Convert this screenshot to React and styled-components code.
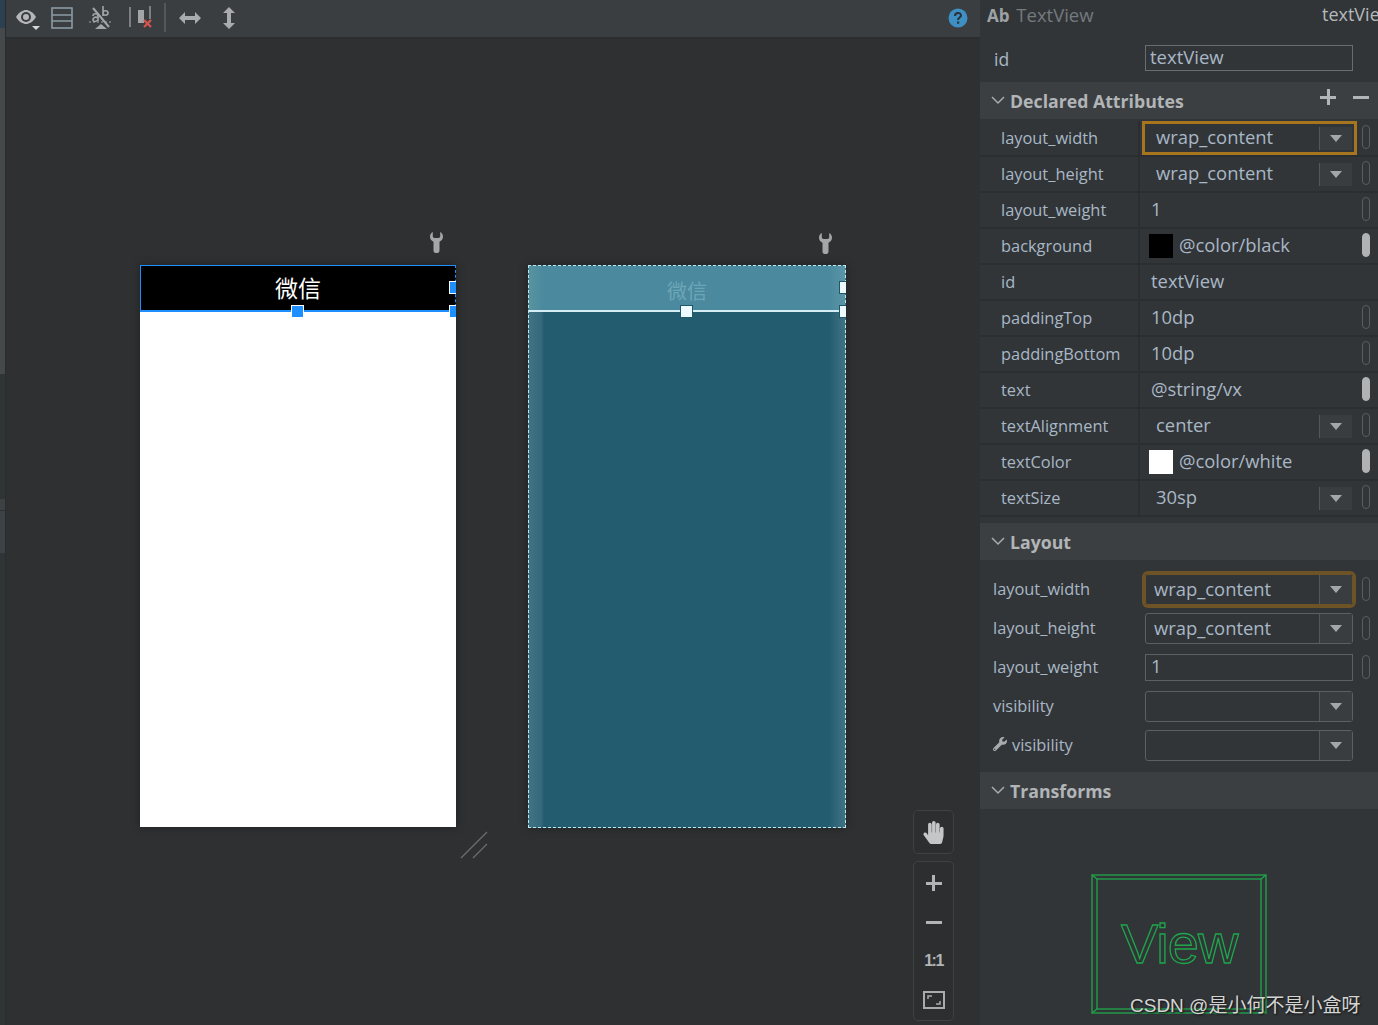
import styled, { createGlobalStyle } from "styled-components";
import { FaHandPaper, FaWrench } from "react-icons/fa";

const GlobalStyle = createGlobalStyle`
  html, body { margin: 0; padding: 0; background: #2f3032; }
  body { font-family: "Open Sans", "Noto Sans CJK SC", sans-serif; overflow: hidden; }
  * { box-sizing: border-box; }
`;

const declared = [
  { name: "layout_width", type: "select", value: "wrap_content", focus: true, pill: "empty" },
  { name: "layout_height", type: "select", value: "wrap_content", pill: "empty" },
  { name: "layout_weight", type: "text", value: "1", pill: "empty" },
  { name: "background", type: "color", value: "@color/black", swatch: "#000", pill: "full" },
  { name: "id", type: "text", value: "textView" },
  { name: "paddingTop", type: "text", value: "10dp", pill: "empty" },
  { name: "paddingBottom", type: "text", value: "10dp", pill: "empty" },
  { name: "text", type: "text", value: "@string/vx", pill: "full" },
  { name: "textAlignment", type: "select", value: "center", pill: "empty" },
  { name: "textColor", type: "color", value: "@color/white", swatch: "#fff", pill: "full" },
  { name: "textSize", type: "select", value: "30sp", pill: "empty" },
];

const layoutFields = [
  { name: "layout_width", type: "select", value: "wrap_content", focus: true, pill: true },
  { name: "layout_height", type: "select", value: "wrap_content", pill: true },
  { name: "layout_weight", type: "text", value: "1", pill: true },
  { name: "visibility", type: "select", value: "" },
  { name: "visibility", type: "select", value: "", tool: true },
];

const EyeIcon = () => (
  <svg width="26" height="26" viewBox="0 0 26 26">
    <path d="M1 12c3-5 7-7 10-7s7 2 10 7c-3 5-7 7-10 7s-7-2-10-7z" fill="#b4b6b8" />
    <circle cx="11" cy="12" r="5" fill="#3b3e41" />
    <circle cx="11" cy="12" r="3" fill="#b4b6b8" />
    <path d="M18 23h8l-4 4z" fill="#d5d7d9" transform="translate(-1 -2)" />
  </svg>
);

const BlueprintIcon = () => (
  <svg width="22" height="22" viewBox="0 0 22 22" fill="none" stroke="#8b9aa3" strokeWidth="1.6">
    <rect x="1" y="1" width="20" height="20" />
    <path d="M1 8h20M1 14h20" />
  </svg>
);

const ConstraintIcon = () => (
  <svg width="26" height="26" viewBox="0 0 26 26" fill="none" stroke="#a3a5a7">
    <path d="M5 3l16 19" strokeWidth="2" />
    <path d="M5 11c0-3 5-3 5 0v5M10 13c-3-2-5 0-5 2s3 2 5 0" strokeWidth="1.6" />
    <path d="M15 1v10M15 8c0-3 5-3 5 0s-5 3-5 0" strokeWidth="1.6" />
    <path d="M1 17h24" strokeWidth="1.2" strokeDasharray="2 2" />
    <path d="M13 19l6 5H7z" fill="#a3a5a7" stroke="none" />
  </svg>
);

const WarningIcon = () => (
  <svg width="26" height="26" viewBox="0 0 26 26" fill="none">
    <path d="M1 2v20" stroke="#8f9193" strokeWidth="1.6" />
    <path d="M9 5h6v13H9z" fill="#a3a5a7" />
    <path d="M21 1v13" stroke="#8f9193" strokeWidth="1.6" />
    <path d="M15 15l7 7M22 15l-7 7" stroke="#d9534f" strokeWidth="2.2" />
  </svg>
);

const HorizontalIcon = () => (
  <svg width="22" height="14" viewBox="0 0 22 14" fill="#a9abad">
    <path d="M0 7l6-6v4h10V1l6 6-6 6V9H6v4z" />
  </svg>
);

const VerticalIcon = () => (
  <svg width="14" height="22" viewBox="0 0 14 22" fill="#a9abad">
    <path d="M7 0l6 6H9v10h4l-6 6-6-6h4V6H1z" />
  </svg>
);

const HelpIcon = () => (
  <svg width="20" height="20" viewBox="0 0 20 20">
    <circle cx="10" cy="10" r="9.5" fill="#3d8fc4" />
    <path d="M7 8c0-4 6-4 6-.5 0 2-3 2-3 4.500" fill="none" stroke="#2d3134" strokeWidth="2" />
    <rect x="9" y="13.500" width="2.200" height="2.200" fill="#2d3134" />
  </svg>
);

const WrenchMark = () => (
  <svg width="13" height="21" viewBox="0 0 13 21" fill="#a4a6a8">
    <path d="M2.800 0v4.500q0 1.500 3.700 1.500t3.700-1.500V0C12 .9 13 2.700 13 4.700c0 2.300-1.300 4-3.500 5V18.800a3 2.300 0 0 1-6 0V9.700C1.300 8.700 0 7 0 4.700 0 2.700 1 .9 2.800 0z" />
  </svg>
);

const Chevron = () => (
  <svg width="14" height="9" viewBox="0 0 14 9" fill="none" stroke="#a9acae" strokeWidth="1.500">
    <path d="M1 1l6 6 6-6" />
  </svg>
);

const FitIcon = () => (
  <svg width="22" height="18" viewBox="0 0 22 18" fill="none" stroke="#a9abad">
    <rect x="1" y="1" width="20" height="16" strokeWidth="2" />
    <path d="M5 8V5h4M17 10v3h-4" strokeWidth="1.500" />
  </svg>
);

const ResizeMark = () => (
  <svg width="28" height="28" viewBox="0 0 28 28" fill="none" stroke="#6d6e70" strokeWidth="1.200">
    <path d="M1 27L27 1M13 27L27 13" />
  </svg>
);

const ViewBadge = () => (
  <svg width="178" height="141" viewBox="0 0 178 141" fill="none" stroke="#1fa64c" strokeWidth="1.300">
    <rect x="1" y="1" width="174" height="138" />
    <rect x="6" y="5" width="164" height="130" />
    <path d="M1 1l5 4M175 1l-5 4M1 139l5-4M175 139l-5-4" />
    <ViewWord x="30" y="89">View</ViewWord>
  </svg>
);

const Field = ({ item }) => (
  <FieldBox $focus={item.focus} $plain={item.type === "text"}>
    <FieldText $plain={item.type === "text"}>{item.value}</FieldText>
    {item.type === "select" && (
      <FieldArrow>
        <Caret />
      </FieldArrow>
    )}
  </FieldBox>
);

const App = () => {
  return (
    <>
      <GlobalStyle />
      <Page>
        <Rail>
          <RailPiece $height={28} $color="#2b4050" />
          <RailPiece $height={346} $color="#46494b" />
          <RailPiece $height={125} $color="#2f3436" />
          <RailPiece $height={11} $color="#3d4143" />
          <RailPiece $height={1} $color="#2f3134" />
          <RailPiece $height={42} $color="#3c4245" />
        </Rail>
        <Editor>
          <Toolbar>
            <ToolGroup>
              <ToolSlot $width={36}><EyeIcon /></ToolSlot>
              <ToolSlot $width={32}><BlueprintIcon /></ToolSlot>
              <ToolSlot $width={46}><ConstraintIcon /></ToolSlot>
              <ToolSlot $width={36}><WarningIcon /></ToolSlot>
              <ToolDivider />
              <ToolSlot $width={40}><HorizontalIcon /></ToolSlot>
              <ToolSlot $width={38}><VerticalIcon /></ToolSlot>
            </ToolGroup>
            <HelpIcon />
          </Toolbar>
          <Canvas>
            <Phone $width={316}>
              <PhoneWrench $right={13}><WrenchMark /></PhoneWrench>
              <DesignBar>
                <DesignTitle>微信</DesignTitle>
                <Handle $blue $side="center" />
                <Handle $blue $side="right" />
                <Handle $blue $side="corner" />
              </DesignBar>
              <DesignBody />
              <ResizeSpot><ResizeMark /></ResizeSpot>
            </Phone>
            <BlueprintPhone>
              <PhoneWrench $right={13}><WrenchMark /></PhoneWrench>
              <BlueprintBar>
                <BlueprintTitle>微信</BlueprintTitle>
                <Handle $side="center" />
                <Handle $side="right" />
                <Handle $side="corner" />
              </BlueprintBar>
            </BlueprintPhone>
            <ZoomTools>
              <ToolCard>
                <ZoomButton $height={42}><FaHandPaper size={23} color="#c4c6c8" /></ZoomButton>
              </ToolCard>
              <ToolCard>
                <ZoomButton $height={42}><PlusSign /></ZoomButton>
                <ZoomButton $height={37}><MinusSign /></ZoomButton>
                <ZoomButton $height={39}><ActualSize>1:1</ActualSize></ZoomButton>
                <ZoomButton $height={40}><FitIcon /></ZoomButton>
              </ToolCard>
            </ZoomTools>
          </Canvas>
        </Editor>
        <Panel>
          <PanelHeader>
            <ComponentName><b>Ab</b> TextView</ComponentName>
            <ComponentId>textView</ComponentId>
          </PanelHeader>
          <IdRow>
            <IdLabel>id</IdLabel>
            <IdInput>textView</IdInput>
          </IdRow>
          <SectionHeader>
            <Chevron />
            <SectionTitle>Declared Attributes</SectionTitle>
            <SectionActions>
              <PlusSign />
              <MinusSign />
            </SectionActions>
          </SectionHeader>
          <AttrList>
            {declared.map((attr) => (
              <AttrRow key={attr.name}>
                <AttrName>{attr.name}</AttrName>
                <AttrValue $focus={attr.focus}>
                  {attr.type === "color" && <Swatch $color={attr.swatch} />}
                  <AttrText $select={attr.type === "select"}>{attr.value}</AttrText>
                  {attr.type === "select" && (
                    <AttrArrow>
                      <Caret />
                    </AttrArrow>
                  )}
                </AttrValue>
                {attr.pill && <Pill $full={attr.pill === "full"} />}
              </AttrRow>
            ))}
          </AttrList>
          <SectionHeader $top={6}>
            <Chevron />
            <SectionTitle>Layout</SectionTitle>
          </SectionHeader>
          <FieldList>
            {layoutFields.map((item, i) => (
              <FieldRow key={i}>
                <FieldName>
                  {item.tool && <FaWrench size={14} color="#a9acae" />}
                  {item.name}
                </FieldName>
                <Field item={item} />
                {item.pill && <Pill />}
              </FieldRow>
            ))}
          </FieldList>
          <SectionHeader $top={7}>
            <Chevron />
            <SectionTitle>Transforms</SectionTitle>
          </SectionHeader>
          <PreviewArea>
            <ViewBadge />
            <Watermark>CSDN @是小何不是小盒呀</Watermark>
          </PreviewArea>
        </Panel>
      </Page>
    </>
  );
};

export default App;

const Page = styled.div`
  display: flex;
  width: 1378px;
  height: 1025px;
  overflow: hidden;
  background: #2f3032;
`;

const Rail = styled.div`
  display: flex;
  flex-direction: column;
  flex: 0 0 5px;
  background: #2f3436;
`;

const RailPiece = styled.div`
  height: ${(p) => p.$height}px;
  background: ${(p) => p.$color};
`;

const Editor = styled.div`
  display: flex;
  flex-direction: column;
  flex: 0 0 975px;
  border-left: 1px solid #2b2c2e;
`;

const Toolbar = styled.div`
  display: flex;
  align-items: center;
  justify-content: space-between;
  height: 39px;
  padding: 0 12px 2px 4px;
  background: #3b3e41;
  border-bottom: 2px solid #2c2d2f;
`;

const ToolGroup = styled.div`
  display: flex;
  align-items: center;
`;

const ToolSlot = styled.div`
  display: flex;
  justify-content: center;
  align-items: center;
  width: ${(p) => p.$width}px;
`;

const ToolDivider = styled.div`
  width: 2px;
  height: 29px;
  margin: 0 4px;
  background: #55585a;
`;

const Canvas = styled.div`
  position: relative;
  display: flex;
  align-items: flex-start;
  gap: 72px;
  flex: 1;
  padding: 226px 0 0 134px;
`;

const Phone = styled.div`
  position: relative;
  display: flex;
  flex-direction: column;
  width: ${(p) => p.$width}px;
  height: 562px;
  box-shadow: 0 0 8px rgba(0, 0, 0, 0.35);
`;

const PhoneWrench = styled.div`
  position: absolute;
  top: -33px;
  right: ${(p) => p.$right}px;
  line-height: 0;
`;

const DesignBar = styled.div`
  position: relative;
  display: flex;
  justify-content: center;
  align-items: center;
  height: 47px;
  background: #000;
  border: 1px solid #1e8fff;
  border-bottom-width: 2px;
  border-right-style: dashed;
`;

const DesignTitle = styled.span`
  color: #fff;
  font-size: 23px;
  font-family: "Noto Sans CJK SC", sans-serif;
  margin-top: -3px;
`;

const DesignBody = styled.div`
  flex: 1;
  background: #fff;
`;

const Handle = styled.span`
  position: absolute;
  width: 13px;
  height: 13px;
  background: ${(p) => (p.$blue ? "#1e8fff" : "#ecf9fd")};
  border: 1.5px solid ${(p) => (p.$blue ? "#fff" : "#1f5668")};
  ${(p) => p.$side === "center" && "left: 50%; margin-left: -7px; bottom: -8px;"}
  ${(p) => p.$side === "right" && "right: -1px; top: 15px; width: 7px; border-right: 0;"}
  ${(p) => p.$side === "corner" && "right: -1px; bottom: -8px; width: 7px; border-right: 0;"}
`;

const ResizeSpot = styled.div`
  position: absolute;
  right: -32px;
  bottom: -32px;
  line-height: 0;
`;

const BlueprintPhone = styled.div`
  position: relative;
  display: flex;
  flex-direction: column;
  width: 318px;
  height: 563px;
  background: linear-gradient(90deg, #3f7384 0, #35697b 12px, #245c6f 15px, #245c6f calc(100% - 16px), #3f7384 100%);
  border: 1px dashed #bfe6ef;
  box-shadow: 0 0 8px rgba(0, 0, 0, 0.35);
`;

const BlueprintBar = styled.div`
  position: relative;
  display: flex;
  justify-content: center;
  align-items: center;
  height: 46px;
  background: linear-gradient(90deg, #58949f 0, #4b899e 14px, #4b899e calc(100% - 16px), #5a95a8 100%);
  border-bottom: 2px solid #d5eef5;
`;

const BlueprintTitle = styled.span`
  color: #6ba6b8;
  font-size: 20px;
  font-family: "Noto Sans CJK SC", sans-serif;
  margin-top: 4px;
`;

const ZoomTools = styled.div`
  position: absolute;
  right: 26px;
  bottom: 4px;
  display: flex;
  flex-direction: column;
  gap: 7px;
`;

const ToolCard = styled.div`
  display: flex;
  flex-direction: column;
  width: 41px;
  background: #2d2e30;
  border: 1px solid #3f4143;
  border-radius: 5px;
`;

const ZoomButton = styled.div`
  display: flex;
  justify-content: center;
  align-items: center;
  height: ${(p) => p.$height}px;
`;

const PlusSign = styled.span`
  position: relative;
  display: block;
  width: 16px;
  height: 16px;
  background: linear-gradient(#b2b4b6, #b2b4b6) center / 100% 3px no-repeat,
    linear-gradient(#b2b4b6, #b2b4b6) center / 3px 100% no-repeat;
`;

const MinusSign = styled.span`
  display: block;
  width: 16px;
  height: 3px;
  background: #b2b4b6;
`;

const ActualSize = styled.span`
  color: #b2b4b6;
  font-family: "Liberation Sans", sans-serif;
  font-size: 16px;
  font-weight: 700;
  letter-spacing: -1.5px;
`;

const Panel = styled.div`
  display: flex;
  flex-direction: column;
  flex: 0 0 398px;
  background: #313537;
  color: #a9b7c6;
  overflow: hidden;
`;

const PanelHeader = styled.div`
  display: flex;
  align-items: center;
  justify-content: space-between;
  height: 30px;
  padding: 0 0 2px 7px;
`;

const ComponentName = styled.div`
  font-size: 18.500px;
  color: #747a7f;
  word-spacing: 2px;

  b {
    color: #9ea2a5;
    font-size: 17px;
  }
`;

const ComponentId = styled.div`
  font-size: 18px;
  color: #b4b8bb;
  width: 56px;
  white-space: nowrap;
`;

const IdRow = styled.div`
  display: flex;
  height: 52px;
  padding-top: 15px;
`;

const IdLabel = styled.div`
  width: 165px;
  padding: 1px 0 0 14px;
  font-size: 17.500px;
  line-height: 26px;
`;

const IdInput = styled.div`
  width: 208px;
  height: 26px;
  padding-left: 4px;
  border: 1px solid #6a6d70;
  font-size: 18.500px;
  line-height: 21px;
`;

const SectionHeader = styled.div`
  display: flex;
  align-items: center;
  flex: 0 0 37px;
  gap: 5px;
  margin-top: ${(p) => p.$top || 0}px;
  padding-left: 11px;
  background: #3c3f41;
`;

const SectionTitle = styled.div`
  font-size: 17.700px;
  font-weight: 700;
  color: #b1b5b8;
`;

const SectionActions = styled.div`
  display: flex;
  align-items: center;
  gap: 17px;
  margin-left: auto;
  padding: 0 9px 7px 0;
`;

const AttrList = styled.div`
  margin-top: 2px;
`;

const AttrRow = styled.div`
  position: relative;
  display: flex;
  align-items: center;
  height: 36px;
  border-bottom: 2px solid #2b2e30;
`;

const AttrName = styled.div`
  flex: 0 0 160px;
  align-self: stretch;
  padding-left: 21px;
  font-size: 16.400px;
  line-height: 34px;
  border-right: 2px solid #2b2e30;
`;

const AttrValue = styled.div`
  display: flex;
  align-items: center;
  width: 215px;
  height: 34px;
  margin-left: 2px;
  border: 3px solid ${(p) => (p.$focus ? "#a8751f" : "transparent")};
  padding-left: 4px;
`;

const AttrText = styled.span`
  flex: 1;
  padding-left: ${(p) => (p.$select ? 7 : 2)}px;
  margin-top: -3px;
  font-size: 18.400px;
`;

const AttrArrow = styled.span`
  display: flex;
  justify-content: center;
  align-items: center;
  width: 33px;
  height: 23px;
  margin-right: 2px;
  background: #3a3d3f;
  border-left: 1px solid #54585a;
`;

const Swatch = styled.span`
  flex: 0 0 24px;
  height: 24px;
  margin-right: 4px;
  background: ${(p) => p.$color};
`;

const Caret = styled.span`
  width: 0;
  height: 0;
  border-left: 6px solid transparent;
  border-right: 6px solid transparent;
  border-top: 7px solid #a4a7a9;
`;

const Pill = styled.span`
  position: absolute;
  left: 382px;
  top: 50%;
  width: 8px;
  height: 24px;
  margin-top: -13px;
  background: ${(p) => (p.$full ? "#b0b2b4" : "transparent")};
  border: 1px solid ${(p) => (p.$full ? "#b0b2b4" : "#5b5e60")};
  border-radius: 4px;
`;

const FieldList = styled.div`
  padding-top: 10px;
`;

const FieldRow = styled.div`
  position: relative;
  display: flex;
  align-items: center;
  height: 39px;
`;

const FieldName = styled.div`
  display: flex;
  align-items: center;
  gap: 5px;
  flex: 0 0 165px;
  padding: 0 0 3px 13px;
  font-size: 16.400px;
`;

const FieldBox = styled.div`
  display: flex;
  align-items: stretch;
  width: 208px;
  height: ${(p) => (p.$plain ? 27 : 31)}px;
  border: 1px solid #5d6062;
  border-radius: ${(p) => (p.$plain ? 0 : 3)}px;
  ${(p) => p.$focus && "box-shadow: 0 0 0 3px #6e5326; border-color: #6e5326;"}
`;

const FieldText = styled.span`
  flex: 1;
  padding-left: ${(p) => (p.$plain ? 5 : 8)}px;
  font-size: 18.400px;
  line-height: ${(p) => (p.$plain ? 22 : 28)}px;
`;

const FieldArrow = styled.span`
  display: flex;
  justify-content: center;
  align-items: center;
  width: 33px;
  background: #3a3d3f;
  border-left: 1px solid #54585a;
`;

const PreviewArea = styled.div`
  position: relative;
  flex: 1;
  padding: 65px 0 0 111px;
`;

const ViewWord = styled.text`
  font-family: "Liberation Sans", sans-serif;
  font-size: 56px;
  letter-spacing: -1px;
  fill: none;
  stroke: #1fa64c;
  stroke-width: 1.300px;
`;

const Watermark = styled.div`
  position: absolute;
  left: 150px;
  bottom: 8px;
  color: #d4d4d4;
  font-family: "Liberation Sans", "Noto Sans CJK SC", sans-serif;
  font-size: 19px;
  white-space: nowrap;
  text-shadow: 1px 1px 2px #111;
`;
